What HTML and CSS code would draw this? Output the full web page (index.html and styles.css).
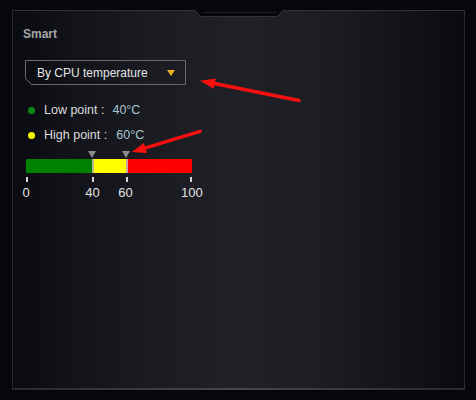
FILE: index.html
```html
<!DOCTYPE html>
<html lang="en">
<head>
<meta charset="utf-8">
<title>Smart fan mode</title>
<link rel="stylesheet" href="styles.css">
</head>
<body>
  <section class="panel">
    <svg class="panel-edge" width="451" height="8" viewBox="0 0 451 8">
      <path class="notch-fill" d="M182 0 L187.5 6 H264.5 L270 0 Z"/>
      <path class="edge-line" d="M0 0.5 H182 L187.5 6.5 H264.5 L270 0.5 H451"/>
      <line class="notch-inner" x1="190" y1="2.5" x2="263" y2="2.5"/>
    </svg>
    <div class="panel-body">
      <h2 class="title">Smart</h2>

      <div class="select">
        <span class="select-text">By CPU temperature</span>
        <span class="caret"></span>
      </div>

      <ul class="points">
        <li class="point">
          <i class="dot dot-low"></i>
          <span class="point-label">Low point :</span>
          <span class="point-value">40°C</span>
        </li>
        <li class="point">
          <i class="dot dot-high"></i>
          <span class="point-label">High point :</span>
          <span class="point-value value-high">60°C</span>
        </li>
      </ul>

      <div class="range">
        <div class="markers">
          <div class="seg" style="width:40%"></div>
          <div class="seg marker-span" style="width:20%">
            <span class="mark mark-start"></span>
            <span class="mark mark-end"></span>
          </div>
        </div>
        <div class="bar">
          <div class="zone zone-green" style="width:40%"></div>
          <div class="zone zone-yellow" style="width:20%"></div>
          <div class="zone zone-red" style="width:40%"></div>
        </div>
        <div class="ticks">
          <div class="tick" style="width:40%"></div>
          <div class="tick" style="width:20%"></div>
          <div class="tick tick-last" style="width:40%"></div>
        </div>
        <div class="labels">
          <div class="seg" style="width:40%"><span class="num">0</span></div>
          <div class="seg" style="width:20%"><span class="num">40</span></div>
          <div class="seg seg-last" style="width:40%"><span class="num">60</span><span class="num num-end">100</span></div>
        </div>
      </div>
    </div>
  </section>

  <svg class="annotations" width="476" height="400" viewBox="0 0 476 400">
    <line class="arrow-line" x1="299" y1="100.5" x2="212" y2="83"/>
    <polygon class="arrow-head" points="200,80.7 215.7,78.5 213.7,88.8"/>
    <line class="arrow-line" x1="200" y1="131.3" x2="144" y2="148.3"/>
    <polygon class="arrow-head" points="131.7,152 143.9,142.9 147.1,152.9"/>
  </svg>
</body>
</html>
```

FILE: styles.css
```css
* {
  box-sizing: border-box;
}

html, body {
  margin: 0;
  padding: 0;
}

body {
  position: relative;
  width: 476px;
  height: 400px;
  overflow: hidden;
  background: #05070c;
  font-family: "Liberation Sans", Arial, sans-serif;
  padding-top: 10px;
}

.panel {
  margin-left: 12px;
  width: 453px;
  height: 380px;
  border-left: 1px solid #25282e;
  border-right: 1px solid #25282e;
  border-bottom: 2px solid #3a3c42;
  border-image: linear-gradient(to right, #26292f, #46484d 50%, #26292f) 1;
  border-top: 0;
  background: linear-gradient(to right,
    #090b11 0%,
    #101218 11%,
    #1a1c21 31%,
    #1f2126 50%,
    #1b1d22 69%,
    #101218 89%,
    #080a10 100%);
}

.panel-edge {
  display: block;
}

.notch-fill {
  fill: #05070c;
}

.edge-line {
  fill: none;
  stroke: #30333a;
  stroke-width: 1;
}

.notch-inner {
  stroke: #1d2026;
  stroke-width: 1;
}

.panel-body {
  padding: 9px 0 0 10px;
}

.title {
  margin: 0;
  font-size: 12px;
  line-height: 15px;
  font-weight: bold;
  color: #a6a6a6;
}

.select {
  margin: 18px 0 0 2px;
  width: 161px;
  height: 25px;
  padding: 1px 11px 0 12px;
  display: flex;
  align-items: center;
  justify-content: space-between;
  background: url("data:image/svg+xml,%3Csvg xmlns='http://www.w3.org/2000/svg' width='161' height='25'%3E%3Cpath d='M0.5 0.5 H160.5 V24.5 H6.5 L0.5 18.5 Z' fill='none' stroke='%2366696f'/%3E%3C/svg%3E") no-repeat;
}

.select-text {
  font-size: 12px;
  color: #e4e4e4;
}

.caret {
  width: 0;
  height: 0;
  border-left: 4px solid transparent;
  border-right: 4px solid transparent;
  border-top: 6px solid #f0b21e;
}

.points {
  list-style: none;
  margin: 13px 0 0;
  padding: 0;
}

.point {
  display: flex;
  align-items: center;
  height: 25px;
  font-size: 12.5px;
  line-height: 25px;
}

.dot {
  width: 7px;
  height: 7px;
  border-radius: 50%;
  margin: 0 9px 0 5px;
}

.dot-low {
  background: #0b8a12;
}

.dot-high {
  background: #f6f600;
}

.point-label {
  color: #dcdcdc;
}

.point-value {
  margin-left: 8px;
  color: #a9c5d1;
}

.value-high {
  margin-left: 9px;
}

.range {
  margin: 3px 0 0 3px;
  width: 166px;
}

.markers {
  display: flex;
  height: 7px;
}

.marker-span {
  display: flex;
  justify-content: space-between;
}

.mark {
  width: 0;
  height: 0;
  border-left: 4px solid transparent;
  border-right: 4px solid transparent;
  border-top: 7px solid #8c8c8c;
}

.mark-start {
  margin-left: -4px;
}

.mark-end {
  margin-right: -4px;
}

.bar {
  display: flex;
  margin-top: 1px;
  height: 14px;
}

.zone-green {
  background: #008000;
}

.zone-yellow {
  background: #ffff00;
  border-left: 2px solid #b9b98c;
}

.zone-red {
  background: #ff0000;
  border-left: 2px solid #c9a6a0;
}

.ticks {
  display: flex;
  margin-top: 4px;
  height: 5px;
}

.tick {
  border-left: 2px solid #d4d4d4;
}

.tick-last {
  border-right: 2px solid #d4d4d4;
}

.labels {
  display: flex;
  margin-top: 3px;
  font-size: 13px;
  line-height: 15px;
  color: #e2e2e2;
}

.seg {
  flex: none;
}

.seg-last {
  display: flex;
  justify-content: space-between;
}

.num {
  display: inline-block;
  transform: translateX(-50%);
}

.num-end {
  transform: translateX(50%);
}

.annotations {
  position: absolute;
  top: 0;
  left: 0;
  pointer-events: none;
}

.arrow-line {
  stroke: #f81010;
  stroke-width: 3.5;
  stroke-linecap: round;
}

.arrow-head {
  fill: #f81010;
}
```
